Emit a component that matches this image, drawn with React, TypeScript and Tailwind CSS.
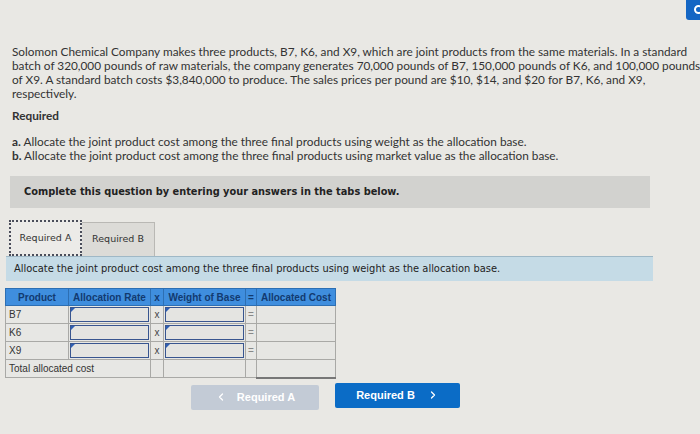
import { ChevronLeft, ChevronRight } from "lucide-react"

// ─── Helpers ────────────────────────────────────────────────────────────────

function InputCell({ w }: { w: string }) {
  return (
    <td className={`${w} p-0 border border-[#a9a9a6]`}>
      <div className="relative h-[15px] m-px border border-[#38558f] bg-[#e4e4e1]">
        <span className="absolute left-0 top-0 w-0 h-0 border-t-[4px] border-r-[4px] border-t-[#2f5fb3] border-r-transparent" />
      </div>
    </td>
  )
}

function Row({ label }: { label: string }) {
  return (
    <tr className="h-[17px]">
      <td className="border border-[#a9a9a6] pl-[3px] text-[#333]">{label}</td>
      <InputCell w="w-[82px]" />
      <td className="border border-[#a9a9a6] text-center text-[#444]">x</td>
      <InputCell w="w-[82px]" />
      <td className="border border-[#a9a9a6] text-center text-[#888]">=</td>
      <td className="border border-[#a9a9a6] bg-[#e6e6e3]"></td>
    </tr>
  )
}

// ─── App ────────────────────────────────────────────────────────────────────

export default function App() {
  const verdana = "font-['DejaVu_Sans',Verdana,sans-serif]"

  return (
    <div className="relative w-[700px] h-[434px] overflow-hidden bg-[#e9e8e4] text-[#333]">
      {/* corner button peeking in */}
      <div className="absolute right-0 top-0 w-[14px] h-[20px] bg-[#1466c4] rounded-bl-[3px] overflow-hidden">
        <span className="absolute left-[8px] top-[5px] w-[9px] h-[9px] rounded-full border-2 border-white" />
      </div>

      <div className="pt-[45px] pl-[12px] font-['Lato','Open_Sans',sans-serif] text-[11.8px] leading-[14px] whitespace-nowrap">
        <p>
          Solomon Chemical Company makes three products, B7, K6, and X9, which are joint products from the same materials. In a standard<br />
          batch of 320,000 pounds of raw materials, the company generates 70,000 pounds of B7, 150,000 pounds of K6, and 100,000 pounds<br />
          of X9. A standard batch costs $3,840,000 to produce. The sales prices per pound are $10, $14, and $20 for B7, K6, and X9,<br />
          respectively.
        </p>

        <p className="mt-[8px] font-bold">Required</p>

        <p className="mt-[12px]">
          <span className="font-bold">a.</span> Allocate the joint product cost among the three final products using weight as the allocation base.<br />
          <span className="font-bold">b.</span> Allocate the joint product cost among the three final products using market value as the allocation base.
        </p>
      </div>

      <div className={`ml-[10px] mt-[13px] w-[640px] h-[32px] flex items-center pl-[14px] bg-[#d2d2cf] ${verdana} font-bold text-[9.8px] text-[#222]`}>
        Complete this question by entering your answers in the tabs below.
      </div>

      {/* tabs */}
      <div className={`flex items-end ml-[9px] mt-[12px] ${verdana} text-[9.5px] text-[#333]`}>
        <div className="w-[73px] h-[36px] flex items-center justify-center border-2 border-dotted border-[#4a4d5a] bg-[#ecebe8]">
          Required A
        </div>
        <div className="w-[73px] h-[34px] flex items-center justify-center border border-l-0 border-b-0 border-[#b9b8b4] bg-[#dcdbd7]">
          Required B
        </div>
      </div>

      <div className={`ml-[6px] w-[647px] h-[25px] flex items-center pl-[8px] bg-[#c5dbe6] border-t border-[#9fb8c6] ${verdana} text-[9.9px] text-[#222]`}>
        Allocate the joint product cost among the three final products using weight as the allocation base.
      </div>

      {/* table */}
      <table className="ml-[5px] mt-[7px] w-[331px] border-collapse font-['Liberation_Sans',Arial,sans-serif] text-[10px]">
        <thead>
          <tr className="h-[17px] bg-[#3f8ede] text-[#123a70] font-bold">
            <th className="w-[63px] border border-[#2d6fb3] font-bold text-center">Product</th>
            <th className="w-[82px] border border-[#2d6fb3] font-bold text-center">Allocation Rate</th>
            <th className="w-[13px] border border-[#2d6fb3] font-bold text-center">x</th>
            <th className="w-[82px] border border-[#2d6fb3] font-bold text-center">Weight of Base</th>
            <th className="w-[11px] border border-[#2d6fb3] font-bold text-center">=</th>
            <th className="border border-[#2d6fb3] font-bold text-center">Allocated Cost</th>
          </tr>
        </thead>
        <tbody className="bg-[#e7e7e4]">
          <Row label="B7" />
          <Row label="K6" />
          <Row label="X9" />
          <tr className="h-[18px]">
            <td colSpan={2} className="border border-[#a9a9a6] pl-[3px] text-[#333]">Total allocated cost</td>
            <td className="border border-[#a9a9a6]"></td>
            <td className="border border-[#a9a9a6]"></td>
            <td className="border border-[#a9a9a6]"></td>
            <td className="border border-[#a9a9a6] border-b-2 border-b-[#777]"></td>
          </tr>
        </tbody>
      </table>

      {/* nav buttons */}
      <div className="flex items-start ml-[191px] mt-[4px] gap-[16px] font-['Liberation_Sans',Arial,sans-serif] text-[11px] font-bold text-white">
        <div className="mt-[2px] w-[128px] h-[25px] flex items-center justify-center gap-[10px] rounded-[2px] bg-[#c3cbd6]">
          <ChevronLeft size={12} strokeWidth={2.5} />
          Required A
        </div>
        <div className="w-[125px] h-[25px] flex items-center justify-center gap-[12px] rounded-[2px] bg-[#0b6cc6]">
          Required B
          <ChevronRight size={12} strokeWidth={2.5} />
        </div>
      </div>
    </div>
  )
}
